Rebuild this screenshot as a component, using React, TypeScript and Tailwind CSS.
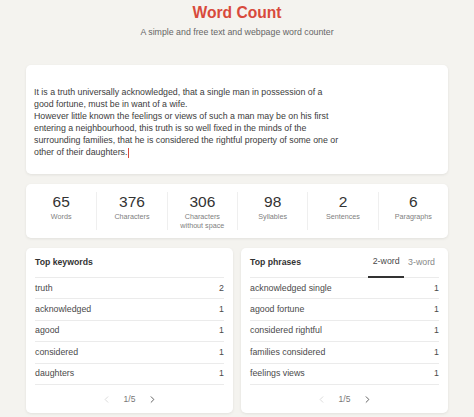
import { ChevronLeft, ChevronRight } from "lucide-react";

const stats = [
  { value: "65", label: ["Words"] },
  { value: "376", label: ["Characters"] },
  { value: "306", label: ["Characters", "without space"] },
  { value: "98", label: ["Syllables"] },
  { value: "2", label: ["Sentences"] },
  { value: "6", label: ["Paragraphs"] },
];

const keywords = [
  ["truth", 2],
  ["acknowledged", 1],
  ["agood", 1],
  ["considered", 1],
  ["daughters", 1],
] as const;

const phrases = [
  ["acknowledged single", 1],
  ["agood fortune", 1],
  ["considered rightful", 1],
  ["families considered", 1],
  ["feelings views", 1],
] as const;

const lines = [
  "It is a truth universally acknowledged, that a single man in possession of a",
  "good fortune, must be in want of a wife.",
  "However little known the feelings or views of such a man may be on his first",
  "entering a neighbourhood, this truth is so well fixed in the minds of the",
  "surrounding families, that he is considered the rightful property of some one or",
];

function Rows({ items }: { items: readonly (readonly [string, number])[] }) {
  return (
    <div>
      {items.map(([word, count]) => (
        <div
          key={word}
          className="flex items-center justify-between h-[21.4px] border-t border-[#ebebeb] text-[8.8px] text-[#4a4a4a]"
        >
          <span>{word}</span>
          <span>{count}</span>
        </div>
      ))}
      <div className="border-t border-[#ebebeb]" />
    </div>
  );
}

function Pager() {
  return (
    <div className="flex items-center justify-center gap-[9px] h-[29px] text-[8.5px] text-[#777]">
      <ChevronLeft size={11} strokeWidth={1.5} className="text-[#cccccc]" />
      <span className="px-[3px]">1/5</span>
      <ChevronRight size={11} strokeWidth={2} className="text-[#555]" />
    </div>
  );
}

export default function App() {
  return (
    <main
      className="min-h-screen bg-[#f4f3ef] pt-[4px]"
      style={{ fontFamily: '"Liberation Sans", Arial, sans-serif' }}
    >
      <div className="w-[422px] mx-auto">
        <h1 className="text-center text-[15.6px] leading-[18px] font-bold text-[#d84a3c]">
          Word Count
        </h1>
        <p className="text-center text-[8.8px] leading-[12px] text-[#666] mt-[4px]">
          A simple and free text and webpage word counter
        </p>

        <div className="mt-[27px] h-[109px] bg-white rounded-[5px] shadow-[0_1px_3px_rgba(0,0,0,0.08)] pl-[8px] pt-[21px] text-[8.8px] leading-[12px] text-[#3c3c3c]">
          {lines.map((l) => (
            <div key={l}>{l}</div>
          ))}
          <div>
            other of their daughters.
            <span className="inline-block w-[1px] h-[10px] bg-[#d84a3c] align-middle ml-[1px]" />
          </div>
        </div>

        <div className="mt-[10px] h-[54px] bg-white rounded-[5px] shadow-[0_1px_3px_rgba(0,0,0,0.08)] py-[8px] grid grid-cols-6">
          {stats.map((s, i) => (
            <div
              key={s.value}
              className={`text-center ${i > 0 ? "border-l border-[#efefef]" : ""}`}
            >
              <div className="text-[15.5px] leading-[19px] text-[#333]">{s.value}</div>
              <div className="text-[7.2px] leading-[9px] text-[#808080] mt-[1px]">
                {s.label.map((t) => (
                  <div key={t}>{t}</div>
                ))}
              </div>
            </div>
          ))}
        </div>

        <div className="mt-[10px] grid grid-cols-2 gap-[8px]">
          <div className="h-[165px] bg-white rounded-[5px] shadow-[0_1px_3px_rgba(0,0,0,0.08)] px-[9px]">
            <div className="h-[29px] flex items-center text-[8.7px] font-bold text-[#333]">
              Top keywords
            </div>
            <Rows items={keywords} />
            <Pager />
          </div>

          <div className="h-[165px] bg-white rounded-[5px] shadow-[0_1px_3px_rgba(0,0,0,0.08)] px-[9px]">
            <div className="h-[29px] flex items-stretch justify-between">
              <div className="flex items-center text-[8.7px] font-bold text-[#333]">
                Top phrases
              </div>
              <div className="flex items-stretch text-[8.8px]">
                <div className="flex items-center px-[4.5px] text-[#4a4a4a] border-b-2 border-[#333] -mb-[1px]">
                  2-word
                </div>
                <div className="flex items-center px-[4px] text-[#888]">3-word</div>
              </div>
            </div>
            <Rows items={phrases} />
            <Pager />
          </div>
        </div>
      </div>
    </main>
  );
}
